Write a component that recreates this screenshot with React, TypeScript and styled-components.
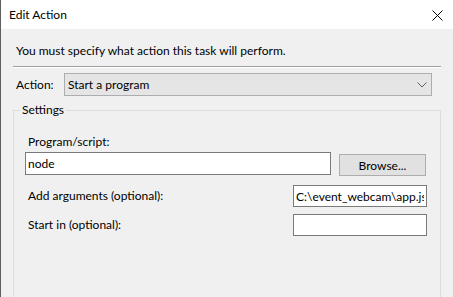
import React from "react";
import styled, { createGlobalStyle } from "styled-components";

const Global = createGlobalStyle`
  html, body { margin: 0; padding: 0; background: #f0f0f0; }
  #root { width: 453px; height: 297px; overflow: hidden; }
  * { box-sizing: border-box; }
`;

const Window = styled.div`
  width: 453px;
  height: 297px;
  border-left: 1px solid #5f5f5f;
  display: flex;
  flex-direction: column;
  font-family: "Lato", "Noto Sans", sans-serif;
  font-size: 12px;
  color: #000;
  overflow: hidden;
`;

const TitleBar = styled.div`
  height: 29px;
  flex: none;
  background: #ffffff;
  display: flex;
  align-items: center;
  justify-content: space-between;
  padding: 0 10px 0 8px;
`;

const Title = styled.span`
  font-size: 12px;
  line-height: 16px;
`;

const CloseButton = styled.div`
  width: 11px;
  height: 11px;
  display: flex;
  align-items: center;
  justify-content: center;
  margin-top: 1px;
`;

const Body = styled.div`
  flex: 1;
  background: #f0f0f0;
  padding: 14px 12px 0 12px;
  display: flex;
  flex-direction: column;
`;

const Intro = styled.div`
  line-height: 16px;
  padding-left: 3px;
`;

const Separator = styled.div`
  margin-top: 7px;
  height: 2px;
  border-top: 1px solid #a0a0a0;
  border-bottom: 1px solid #ffffff;
`;

const ActionRow = styled.div`
  margin-top: 5px;
  display: flex;
  align-items: center;
  height: 23px;
`;

const RowLabel = styled.span`
  width: 51px;
  padding-left: 3px;
  line-height: 16px;
  flex: none;
`;

const Select = styled.div`
  width: 368px;
  height: 23px;
  background: #e5e5e5;
  border: 1px solid #adadad;
  display: flex;
  align-items: center;
  justify-content: space-between;
  padding: 0 4px 0 3px;
  line-height: 16px;
`;

const Group = styled.fieldset`
  margin: 6px 0 0 0;
  padding: 0;
  border: 1px solid #dcdcdc;
  height: 220px;
  min-width: 0;
`;

const Legend = styled.legend`
  margin-left: 6px;
  padding: 0 2px;
  line-height: 16px;
`;

const GroupContent = styled.div`
  padding: 16px 13px 0 11px;
  display: flex;
  flex-direction: column;
`;

const FieldLabel = styled.span`
  padding-left: 3px;
  line-height: 16px;
`;

const ProgramRow = styled.div`
  margin-top: 2px;
  display: flex;
  align-items: flex-start;
  gap: 8px;
`;

const TextInput = styled.input<{ $w: number; $h?: number }>`
  width: ${(p) => p.$w}px;
  height: ${(p) => p.$h ?? 22}px;
  border: 1px solid #7a7a7a;
  background: #ffffff;
  padding: 0 2px;
  margin: 0;
  font-family: inherit;
  font-size: 12px;
  color: #000;
  outline: none;
  flex: none;
`;

const Button = styled.button`
  width: 87px;
  height: 22px;
  margin-top: 2px;
  background: #e1e1e1;
  border: 1px solid #adadad;
  font-family: inherit;
  font-size: 12px;
  color: #000;
  padding: 0;
  flex: none;
`;

const OptionRow = styled.div<{ $top: number }>`
  margin-top: ${(p) => p.$top}px;
  display: flex;
  align-items: center;
  justify-content: space-between;
`;

export default function App() {
  return (
    <>
      <Global />
      <Window>
        <TitleBar>
          <Title>Edit Action</Title>
          <CloseButton>
            <svg width="11" height="11" viewBox="0 0 11 11">
              <path d="M0.5 0.5 L10.5 10.5 M10.5 0.5 L0.5 10.5" stroke="#000" strokeWidth="1" fill="none" />
            </svg>
          </CloseButton>
        </TitleBar>
        <Body>
          <Intro>You must specify what action this task will perform.</Intro>
          <Separator />
          <ActionRow>
            <RowLabel>Action:</RowLabel>
            <Select>
              <span>Start a program</span>
              <svg width="10" height="6" viewBox="0 0 10 6">
                <path d="M0.5 0.5 L5 5 L9.5 0.5" stroke="#606060" strokeWidth="1" fill="none" />
              </svg>
            </Select>
          </ActionRow>
          <Group>
            <Legend>Settings</Legend>
            <GroupContent>
              <FieldLabel>Program/script:</FieldLabel>
              <ProgramRow>
                <TextInput $w={306} $h={23} readOnly value="node" />
                <Button>Browse...</Button>
              </ProgramRow>
              <OptionRow $top={9}>
                <FieldLabel>Add arguments (optional):</FieldLabel>
                <TextInput $w={134} readOnly value="C:\event_webcam\app.js" />
              </OptionRow>
              <OptionRow $top={7}>
                <FieldLabel>Start in (optional):</FieldLabel>
                <TextInput $w={134} readOnly value="" />
              </OptionRow>
            </GroupContent>
          </Group>
        </Body>
      </Window>
    </>
  );
}
